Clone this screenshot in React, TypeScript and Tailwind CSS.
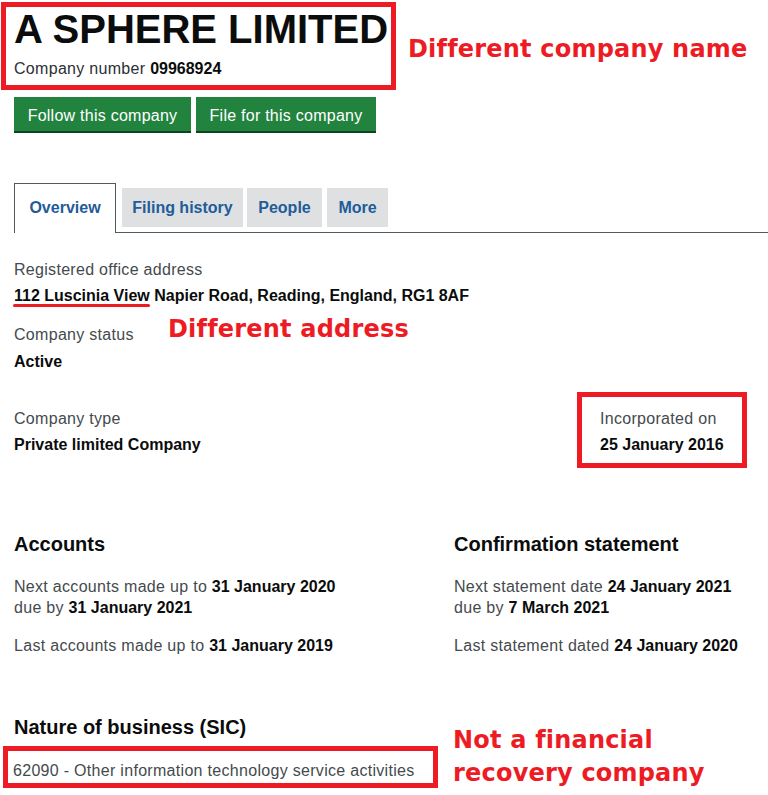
import React from 'react';

const Label: React.FC<{ children: React.ReactNode; className?: string }> = ({ children, className = '' }) => (
  <p className={`text-[16px] leading-[20px] tracking-[0.3px] text-[#454a4d] ${className}`}>{children}</p>
);

const Value: React.FC<{ children: React.ReactNode; className?: string }> = ({ children, className = '' }) => (
  <p className={`text-[16px] leading-[20px] font-bold text-[#0b0c0c] ${className}`}>{children}</p>
);

const Note: React.FC<{ children: React.ReactNode; className?: string }> = ({ children, className = '' }) => (
  <p className={`font-['DejaVu_Sans',Verdana,sans-serif] text-[24px] font-bold tracking-[0.2px] text-[#ed1c24] ${className}`}>
    {children}
  </p>
);

const App: React.FC = () => {
  return (
    <div className="w-[768px] h-[795px] overflow-hidden bg-white font-['Liberation_Sans',Arial,sans-serif] text-[#0b0c0c]">
      {/* Header */}
      <div className="flex items-start">
        <div className="mt-[2px] ml-[1px] w-[395px] h-[88px] border-[5px] border-[#ed1c24] pl-[8px]">
          <h1 className="text-[40px] leading-[44px] font-bold">A SPHERE LIMITED</h1>
          <p className="mt-[8px] text-[16px] leading-[20px] tracking-[0.3px] text-[#2c2f33]">
            Company number <b className="tracking-normal text-[#0b0c0c]">09968924</b>
          </p>
        </div>
        <Note className="ml-[12px] mt-[35px] leading-[28px]">Different company name</Note>
      </div>

      <div className="flex gap-[5px] mt-[7px] ml-[14px]">
        <button className="w-[177px] h-[34px] pt-[4px] text-[16px] leading-[30px] tracking-[0.25px] text-white bg-[#22833f] shadow-[0_2px_0_#0f4422]">
          Follow this company
        </button>
        <button className="w-[180px] h-[34px] pt-[4px] text-[16px] leading-[30px] tracking-[0.25px] text-white bg-[#22833f] shadow-[0_2px_0_#0f4422]">
          File for this company
        </button>
      </div>

      {/* Tabs */}
      <div className="mt-[52px] ml-[14px] h-[50px] flex items-start border-b border-[#505a5f]">
        <div className="w-[102px] h-[50px] -mb-px bg-white border-x border-t border-[#505a5f] pt-[14px] text-center text-[16px] leading-[20px] font-bold text-[#1f5c99]">
          Overview
        </div>
        <div className="ml-[6px] mt-[5px] w-[121px] h-[39px] bg-[#dee0e2] pt-[10px] text-center text-[16px] leading-[20px] font-bold text-[#1f5c99]">
          Filing history
        </div>
        <div className="ml-[4px] mt-[5px] w-[75px] h-[39px] bg-[#dee0e2] pt-[10px] text-center text-[16px] leading-[20px] font-bold text-[#1f5c99]">
          People
        </div>
        <div className="ml-[5px] mt-[5px] w-[61px] h-[39px] bg-[#dee0e2] pt-[10px] text-center text-[16px] leading-[20px] font-bold text-[#1f5c99]">
          More
        </div>
      </div>

      {/* Overview content */}
      <div className="px-[14px]">
        <Label className="mt-[27px]">Registered office address</Label>
        <Value className="mt-[6px]">
          <span className="relative">
            112 Luscinia View
            <span className="absolute -left-px right-0 top-full h-[3px] rounded-full bg-[#ed1c24]" />
          </span>{' '}
          Napier Road, Reading, England, RG1 8AF
        </Value>

        <div className="flex items-start">
          <div className="w-[154px]">
            <Label className="mt-[19px]">Company status</Label>
            <Value className="mt-[7px]">Active</Value>
          </div>
          <Note className="mt-[9px] leading-[28px]">Different address</Note>
        </div>

        <div className="mt-[20px] flex items-start justify-between">
          <div>
            <Label className="mt-[17px]">Company type</Label>
            <Value className="mt-[6px]">Private limited Company</Value>
          </div>
          <div className="mr-[7px] w-[170px] h-[76px] border-[5px] border-[#ed1c24] pl-[18px] pt-[12px]">
            <Label>Incorporated on</Label>
            <Value className="mt-[6px]">25 January 2016</Value>
          </div>
        </div>

        <div className="mt-[62px] grid grid-cols-[440px_1fr]">
          <div>
            <h2 className="text-[20px] leading-[28px] font-bold">Accounts</h2>
            <div className="mt-[18px] text-[16px] leading-[21px] tracking-[0.3px] text-[#454a4d]">
              <p>
                Next accounts made up to <b className="tracking-normal text-[#0b0c0c]">31 January 2020</b>
              </p>
              <p>
                due by <b className="tracking-normal text-[#0b0c0c]">31 January 2021</b>
              </p>
              <p className="mt-[17px]">
                Last accounts made up to <b className="tracking-normal text-[#0b0c0c]">31 January 2019</b>
              </p>
            </div>
          </div>
          <div>
            <h2 className="text-[20px] leading-[28px] font-bold">Confirmation statement</h2>
            <div className="mt-[18px] text-[16px] leading-[21px] tracking-[0.3px] text-[#454a4d]">
              <p>
                Next statement date <b className="tracking-normal text-[#0b0c0c]">24 January 2021</b>
              </p>
              <p>
                due by <b className="tracking-normal text-[#0b0c0c]">7 March 2021</b>
              </p>
              <p className="mt-[17px]">
                Last statement dated <b className="tracking-normal text-[#0b0c0c]">24 January 2020</b>
              </p>
            </div>
          </div>
        </div>

        <div className="mt-[57px] grid grid-cols-[440px_1fr]">
          <div>
            <h2 className="text-[20px] leading-[28px] font-bold">Nature of business (SIC)</h2>
            <div className="mt-[5px] -ml-[11px] w-[435px] h-[42px] border-[5px] border-[#ed1c24] pl-[5px] pt-[10px]">
              <Label>62090 - Other information technology service activities</Label>
            </div>
          </div>
          <Note className="-ml-px mt-[11px] leading-[33px]">
            Not a financial
            <br />
            recovery company
          </Note>
        </div>
      </div>
    </div>
  );
};

export default App;
